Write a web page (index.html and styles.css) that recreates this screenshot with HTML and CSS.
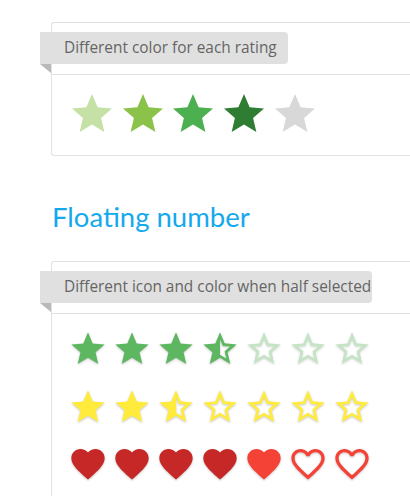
FILE: index.html
```html
<!DOCTYPE html>
<html>
<head>
<meta charset="utf-8">
<link rel="stylesheet" href="styles.css">
</head>
<body>
<svg class="defs" width="0" height="0" aria-hidden="true">
  <defs>
    <symbol id="star" viewBox="0 0 24 24"><path d="M12 17.27L18.18 21l-1.64-7.03L22 9.24l-7.19-.61L12 2 9.19 8.63 2 9.24l5.46 4.73L5.82 21z"/></symbol>
    <symbol id="star-half" viewBox="0 0 24 24"><path d="M22 9.24l-7.19-.62L12 2 9.19 8.63 2 9.24l5.46 4.73L5.82 21 12 17.27 18.18 21l-1.63-7.03L22 9.24zM12 15.4V6.1l1.71 4.04 4.38.38-3.32 2.88 1 4.28L12 15.4z"/></symbol>
    <symbol id="star-border" viewBox="0 0 24 24"><path d="M22 9.24l-7.19-.62L12 2 9.19 8.63 2 9.24l5.46 4.73L5.82 21 12 17.27 18.18 21l-1.63-7.03L22 9.24zM12 15.4l-3.76 2.27 1-4.28-3.32-2.88 4.38-.38L12 6.1l1.71 4.04 4.38.38-3.32 2.88 1 4.28L12 15.4z"/></symbol>
    <symbol id="heart" viewBox="0 0 24 24"><path d="M12 21.35l-1.45-1.32C5.4 15.36 2 12.28 2 8.5 2 5.42 4.42 3 7.5 3c1.74 0 3.41.81 4.5 2.09C13.09 3.81 14.76 3 16.5 3 19.58 3 22 5.42 22 8.5c0 3.78-3.4 6.86-8.55 11.54L12 21.35z"/></symbol>
    <symbol id="heart-border" viewBox="0 0 24 24"><path d="M16.5 3c-1.74 0-3.41.81-4.5 2.09C10.91 3.81 9.24 3 7.5 3 4.42 3 2 5.42 2 8.5c0 3.78 3.4 6.86 8.55 11.54L12 21.35l1.45-1.32C18.6 15.36 22 12.28 22 8.5 22 5.42 19.58 3 16.5 3zm-4.4 15.55l-.1.1-.1-.1C7.14 14.24 4 11.39 4 8.5 4 6.5 5.5 5 7.5 5c1.54 0 3.04.99 3.57 2.36h1.87C13.46 5.99 14.96 5 16.5 5c2 0 3.5 1.5 3.5 3.5 0 2.89-3.14 5.74-7.9 10.05z"/></symbol>
  </defs>
</svg>

<div class="page">
  <div class="card">
    <div class="card-head"><div class="label">Different color for each rating</div></div>
    <div class="card-body">
      <div class="row row-big">
        <svg class="icon c1"><use href="#star"/></svg>
        <svg class="icon c2"><use href="#star"/></svg>
        <svg class="icon c3"><use href="#star"/></svg>
        <svg class="icon c4"><use href="#star"/></svg>
        <svg class="icon c5"><use href="#star"/></svg>
      </div>
    </div>
  </div>

  <h2 class="heading">Floating number</h2>

  <div class="card">
    <div class="card-head"><div class="label">Different icon and color when half selected</div></div>
    <div class="card-body rows">
      <div class="row">
        <svg class="icon green"><use href="#star"/></svg>
        <svg class="icon green"><use href="#star"/></svg>
        <svg class="icon green"><use href="#star"/></svg>
        <svg class="icon green"><use href="#star-half"/></svg>
        <svg class="icon green-light"><use href="#star-border"/></svg>
        <svg class="icon green-light"><use href="#star-border"/></svg>
        <svg class="icon green-light"><use href="#star-border"/></svg>
      </div>
      <div class="row">
        <svg class="icon yellow"><use href="#star"/></svg>
        <svg class="icon yellow"><use href="#star"/></svg>
        <svg class="icon yellow"><use href="#star-half"/></svg>
        <svg class="icon yellow"><use href="#star-border"/></svg>
        <svg class="icon yellow"><use href="#star-border"/></svg>
        <svg class="icon yellow"><use href="#star-border"/></svg>
        <svg class="icon yellow"><use href="#star-border"/></svg>
      </div>
      <div class="row">
        <svg class="icon red-dark"><use href="#heart"/></svg>
        <svg class="icon red-dark"><use href="#heart"/></svg>
        <svg class="icon red-dark"><use href="#heart"/></svg>
        <svg class="icon red-dark"><use href="#heart"/></svg>
        <svg class="icon red"><use href="#heart"/></svg>
        <svg class="icon red"><use href="#heart-border"/></svg>
        <svg class="icon red"><use href="#heart-border"/></svg>
      </div>
    </div>
  </div>
</div>
</body>
</html>
```

FILE: styles.css
```css
html, body {
  margin: 0;
  padding: 0;
  overflow: hidden;
  background: #ffffff;
}

body {
  font-family: Lato, "Open Sans", "Liberation Sans", sans-serif;
}

.defs {
  position: absolute;
  width: 0;
  height: 0;
}

.page {
  padding: 22px 0 0 51px;
}

.card {
  width: 358px;
  border: 1px solid #e2e2e2;
  border-right: none;
  border-radius: 3px 0 0 3px;
}

.card-head {
  position: relative;
  height: 51px;
  border-bottom: 1px solid #e2e2e2;
  display: flex;
  align-items: flex-start;
}

.card-head::after {
  content: "";
  position: absolute;
  left: -12px;
  top: 41px;
  width: 0;
  height: 0;
  border-top: 9px solid #b9b9b9;
  border-left: 11px solid transparent;
}

.label {
  margin: 9px 0 0 -12px;
  max-width: 332px;
  height: 32px;
  line-height: 32px;
  padding: 0 11px 0 24px;
  background: #e0e0e0;
  border-radius: 0 4px 4px 0;
  font-family: "Open Sans", "Liberation Sans", sans-serif;
  font-size: 15.4px;
  color: #656565;
  white-space: nowrap;
  overflow: hidden;
  box-sizing: border-box;
}

.card-body {
  padding: 15px 16px 17px;
}

.rows {
  display: flex;
  flex-direction: column;
  gap: 17.6px;
}

.row {
  display: flex;
  gap: 4px;
}

.icon {
  width: 40px;
  height: 40px;
  display: block;
  flex: none;
}

.row-big {
  gap: 2.7px;
}

.row-big .icon {
  width: 48px;
  height: 48px;
}

.c1 { fill: #c5e1a5; }
.c2 { fill: #8bc34a; }
.c3 { fill: #4caf50; }
.c4 { fill: #2e7d32; }
.c5 { fill: #d8d8d8; }

.green { fill: #5db761; filter: drop-shadow(0 1px 1px rgba(0, 0, 0, 0.22)); }
.green-light { fill: #c4e4c5; filter: drop-shadow(0 1px 1px rgba(0, 0, 0, 0.15)); }
.yellow { fill: #ffeb3b; filter: drop-shadow(0 1px 1px rgba(0, 0, 0, 0.22)); }
.red-dark { fill: #c62828; filter: drop-shadow(0 1px 1px rgba(0, 0, 0, 0.22)); }
.red { fill: #f44336; filter: drop-shadow(0 1px 1px rgba(0, 0, 0, 0.22)); }

.heading {
  margin: 43.5px 0 27.5px 1px;
  font-size: 27.5px;
  line-height: 34px;
  font-weight: 400;
  color: #14a9ec;
}
```
